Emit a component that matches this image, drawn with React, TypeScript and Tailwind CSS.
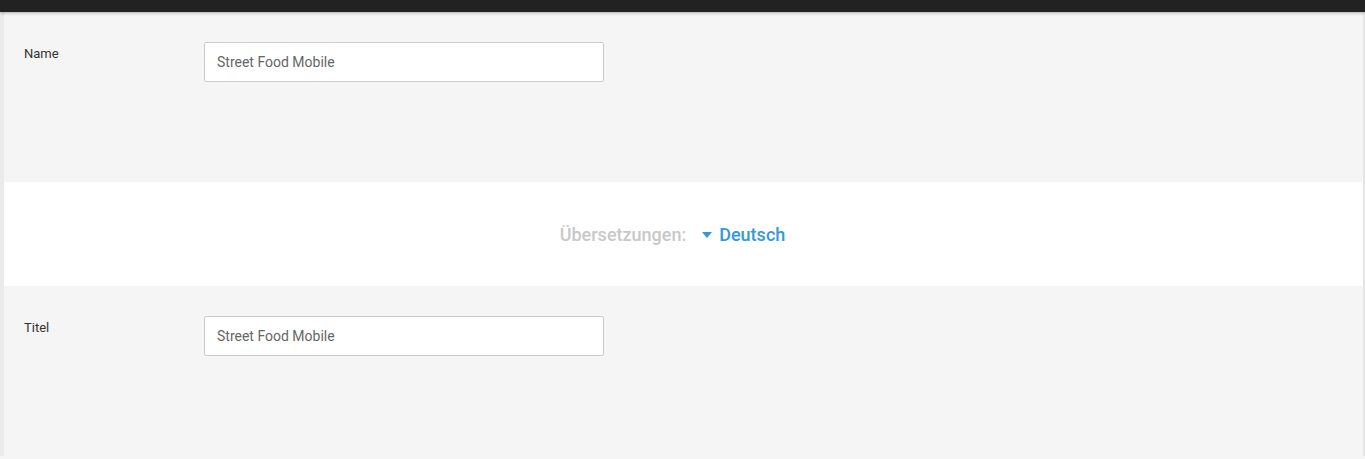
import { useState } from "react";

function FieldRow({ label, value }: { label: string; value: string }) {
  const [text, setText] = useState(value);
  return (
    <div className="flex h-[170px] items-start bg-[#f5f5f5] pt-[30px] pl-[20px]">
      <label className="w-[180px] pt-[4px] text-[13px] leading-[16px] text-[#333]">{label}</label>
      <input
        value={text}
        onChange={(e) => setText(e.target.value)}
        className="h-[40px] w-[400px] rounded-[2px] border border-[#ccc] bg-white px-[12px] text-[14px] text-[#666] outline-none"
      />
    </div>
  );
}

export default function App() {
  return (
    <div className="h-[459px] overflow-hidden bg-[#f5f5f5] font-['Roboto',sans-serif]">
      {/* top bar */}
      <div className="relative z-10 h-[12px] bg-[#222] shadow-[0_1px_3px_rgba(0,0,0,0.3)]" />

      <div className="border-l-[4px] border-r-[2px] border-l-[#ebebeb] border-r-[#e6e6e6]">
        <FieldRow label="Name" value="Street Food Mobile" />

        {/* translations switcher */}
        <div className="flex h-[104px] items-center justify-center bg-white pr-[22px]">
          <span className="text-[18px] font-medium text-[#c8c8c8]">Übersetzungen:</span>
          <button className="ml-[16px] flex items-center gap-[7px] text-[18px] font-medium text-[#3498db]">
            <svg width="10" height="6" viewBox="0 0 10 6" className="mt-[1px]">
              <path d="M0 0h10L5 6z" fill="#3498db" />
            </svg>
            Deutsch
          </button>
        </div>

        <FieldRow label="Titel" value="Street Food Mobile" />
      </div>
    </div>
  );
}
